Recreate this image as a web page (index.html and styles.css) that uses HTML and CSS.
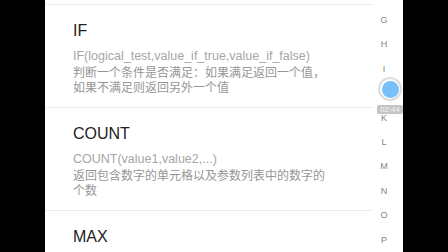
FILE: index.html
```html
<!DOCTYPE html>
<html lang="zh">
<head>
<meta charset="utf-8">
<link rel="stylesheet" href="styles.css">
</head>
<body>
<div class="screen">
  <div class="side"></div>
  <div class="panel">
    <div class="list">
      <div class="item">
        <div class="title">IF</div>
        <div class="syntax">IF(logical_test,value_if_true,value_if_false)</div>
        <div class="desc">判断一个条件是否满足：如果满足返回一个值，</div>
        <div class="desc">如果不满足则返回另外一个值</div>
      </div>
      <div class="item">
        <div class="title">COUNT</div>
        <div class="syntax">COUNT(value1,value2,...)</div>
        <div class="desc">返回包含数字的单元格以及参数列表中的数字的</div>
        <div class="desc">个数</div>
      </div>
      <div class="item">
        <div class="title">MAX</div>
      </div>
    </div>
    <div class="index">
      <span>G</span><span>H</span><span>I</span><span>J</span><span>K</span><span>L</span><span>M</span><span>N</span><span>O</span><span>P</span>
      <div class="bubble"><div class="dot"></div></div>
      <div class="time">02:44</div>
    </div>
  </div>
  <div class="side"></div>
</div>
</body>
</html>
```
FILE: styles.css
```css
html, body {
  margin: 0;
  padding: 0;
  background: #000;
}
.screen {
  display: flex;
  width: 448px;
  height: 252px;
  overflow: hidden;
  font-family: "Liberation Sans", "Noto Sans CJK SC", sans-serif;
}
.side {
  width: 45px;
  background: #000;
  flex: none;
}
.panel {
  width: 358px;
  background: #fff;
  display: flex;
  flex: none;
}
.list {
  width: 328px;
  padding-top: 4px;
  flex: none;
}
.item {
  border-top: 1px solid #ececec;
  padding: 16px 20px 13px 28px;
}
.title {
  font-size: 16px;
  line-height: 20px;
  color: #222;
}
.syntax {
  margin-top: 8px;
  font-size: 12.5px;
  line-height: 15px;
  color: #a6a6a6;
  white-space: nowrap;
}
.desc {
  height: 15px;
  font-size: 12px;
  line-height: 15px;
  color: #969696;
  font-family: "Noto Sans CJK SC", sans-serif;
  white-space: nowrap;
}
.index {
  position: relative;
  width: 30px;
  padding: 8px 8px 0 0;
  box-sizing: border-box;
  display: flex;
  flex-direction: column;
  align-items: center;
}
.index span {
  height: 24.4px;
  line-height: 24.4px;
  font-size: 9px;
  color: #858585;
}
.bubble {
  position: absolute;
  left: 5px;
  top: 77px;
  width: 20px;
  height: 20px;
  border: 2px solid #dcdcdc;
  border-radius: 50%;
  background: #fff;
  display: flex;
  align-items: center;
  justify-content: center;
}
.dot {
  width: 17px;
  height: 17px;
  border-radius: 50%;
  background: #78c0f7;
}
.time {
  position: absolute;
  left: 4px;
  top: 105px;
  width: 26px;
  height: 9px;
  border-radius: 2px;
  background: #c4c4c4;
  color: #f4f4f4;
  font-size: 8px;
  line-height: 9px;
  text-align: center;
}
```
